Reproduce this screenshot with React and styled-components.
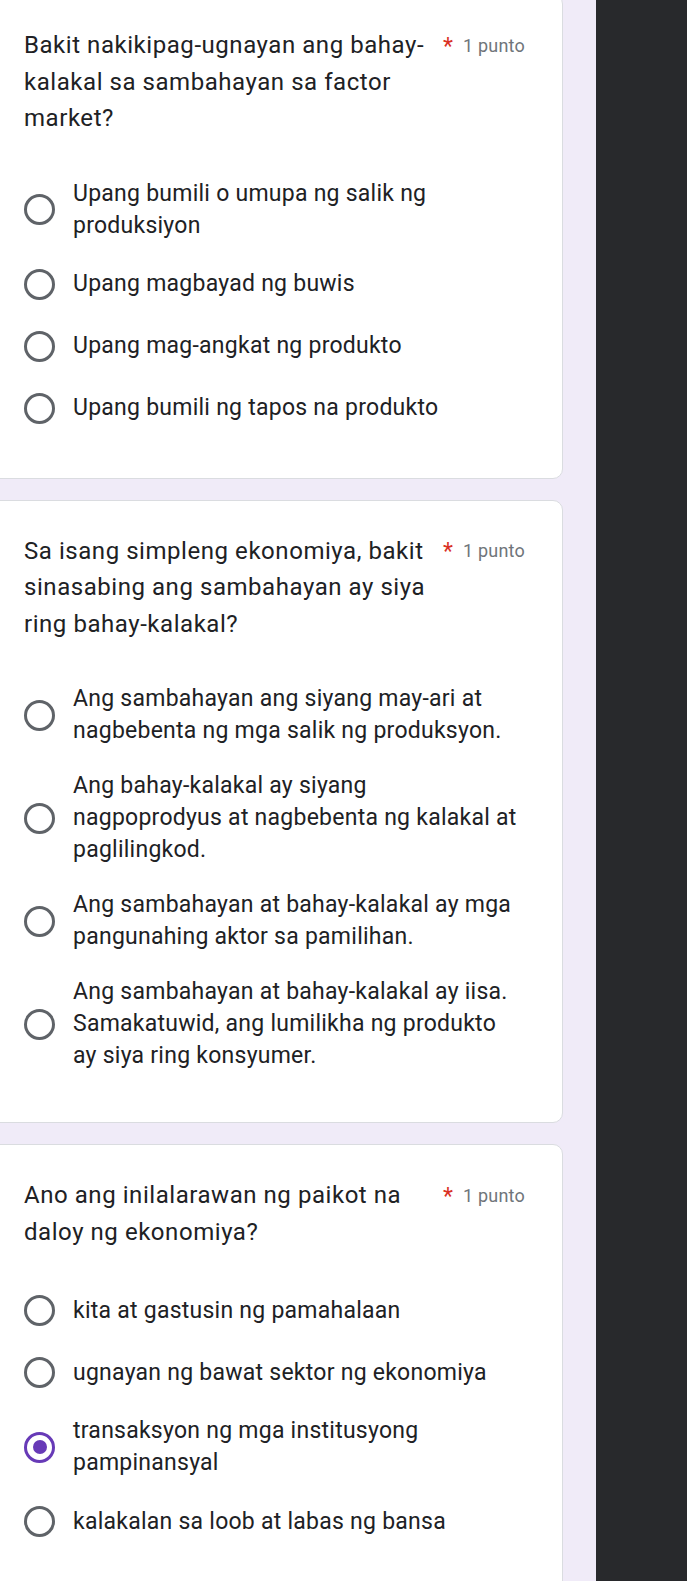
import React from 'react'
import styled, { createGlobalStyle } from 'styled-components'

const GlobalStyle = createGlobalStyle`
    * { box-sizing: border-box; }
    body {
        margin: 0;
        background: #f0ebf8;
        font-family: Roboto, "Noto Sans", "Liberation Sans", sans-serif;
        color: #202124;
    }
`

const questions = [
    {
        title: 'Bakit nakikipag-ugnayan ang bahay-kalakal sa sambahayan sa factor market?',
        options: [
            'Upang bumili o umupa ng salik ng produksiyon',
            'Upang magbayad ng buwis',
            'Upang mag-angkat ng produkto',
            'Upang bumili ng tapos na produkto',
        ],
        selected: -1,
    },
    {
        title: 'Sa isang simpleng ekonomiya, bakit sinasabing ang sambahayan ay siya ring bahay-kalakal?',
        options: [
            'Ang sambahayan ang siyang may-ari at nagbebenta ng mga salik ng produksyon.',
            'Ang bahay-kalakal ay siyang nagpoprodyus at nagbebenta ng kalakal at paglilingkod.',
            'Ang sambahayan at bahay-kalakal ay mga pangunahing aktor sa pamilihan.',
            'Ang sambahayan at bahay-kalakal ay iisa. Samakatuwid, ang lumilikha ng produkto ay siya ring konsyumer.',
        ],
        selected: -1,
    },
    {
        title: 'Ano ang inilalarawan ng paikot na daloy ng ekonomiya?',
        options: [
            'kita at gastusin ng pamahalaan',
            'ugnayan ng bawat sektor ng ekonomiya',
            'transaksyon ng mga institusyong pampinansyal',
            'kalakalan sa loob at labas ng bansa',
        ],
        selected: 2,
    },
]

function App() {
    return (
        <>
            <GlobalStyle />
            <Screen>
                <FormColumn>
                    <CardStack>
                        {questions.map((q, qi) => (
                            <Card key={qi}>
                                <Header>
                                    <Title>{q.title}</Title>
                                    <Points>
                                        <Required>*</Required>
                                        <span>1 punto</span>
                                    </Points>
                                </Header>
                                <OptionList>
                                    {q.options.map((opt, oi) => (
                                        <Option key={oi}>
                                            <Radio $checked={q.selected === oi} />
                                            <OptionText>{opt}</OptionText>
                                        </Option>
                                    ))}
                                </OptionList>
                            </Card>
                        ))}
                    </CardStack>
                </FormColumn>
                <SideBar />
            </Screen>
        </>
    )
}

const Screen = styled.div`
    display: flex;
    width: 687px;
    height: 1581px;
    overflow: hidden;
`

const FormColumn = styled.div`
    flex: 0 0 596px;
    background: #f0ebf8;
    overflow: hidden;
`

const SideBar = styled.div`
    flex: 1;
    background: #28292c;
`

const CardStack = styled.div`
    display: flex;
    flex-direction: column;
    gap: 21px;
    width: 575px;
    margin-top: -6px;
    margin-left: -12px;
`

const Card = styled.div`
    background: #ffffff;
    border: 1px solid #dadce0;
    border-radius: 10px;
    padding: 32px 37px 50px 35px;
`

const Header = styled.div`
    display: flex;
    align-items: flex-start;
`

const Title = styled.div`
    flex: 0 1 410px;
    font-size: 24px;
    letter-spacing: 0.55px;
    line-height: 36.5px;
    color: #202124;
`

const Points = styled.div`
    flex-shrink: 0;
    margin-left: auto;
    display: flex;
    align-items: center;
    gap: 10px;
    height: 36.5px;
    font-size: 18px;
    letter-spacing: 0.2px;
    color: #70757a;
`

const Required = styled.span`
    color: #d93025;
    font-size: 23px;
    line-height: 1;
    margin-top: 2px;
`

const OptionList = styled.div`
    display: flex;
    flex-direction: column;
    gap: 23px;
    margin-top: 41px;
`

const Option = styled.div`
    display: flex;
    align-items: center;
    gap: 18px;
    min-height: 39px;
`

const Radio = styled.span`
    position: relative;
    flex: 0 0 31px;
    width: 31px;
    height: 31px;
    border-radius: 50%;
    border: 3px solid ${p => (p.$checked ? '#673ab7' : '#5f6368')};

    &::after {
        content: '';
        display: ${p => (p.$checked ? 'block' : 'none')};
        position: absolute;
        top: 50%;
        left: 50%;
        width: 14px;
        height: 14px;
        margin: -7px 0 0 -7px;
        border-radius: 50%;
        background: #673ab7;
    }
`

const OptionText = styled.div`
    width: 446px;
    font-size: 23px;
    letter-spacing: 0.25px;
    line-height: 32px;
    color: #202124;
`

export default App
